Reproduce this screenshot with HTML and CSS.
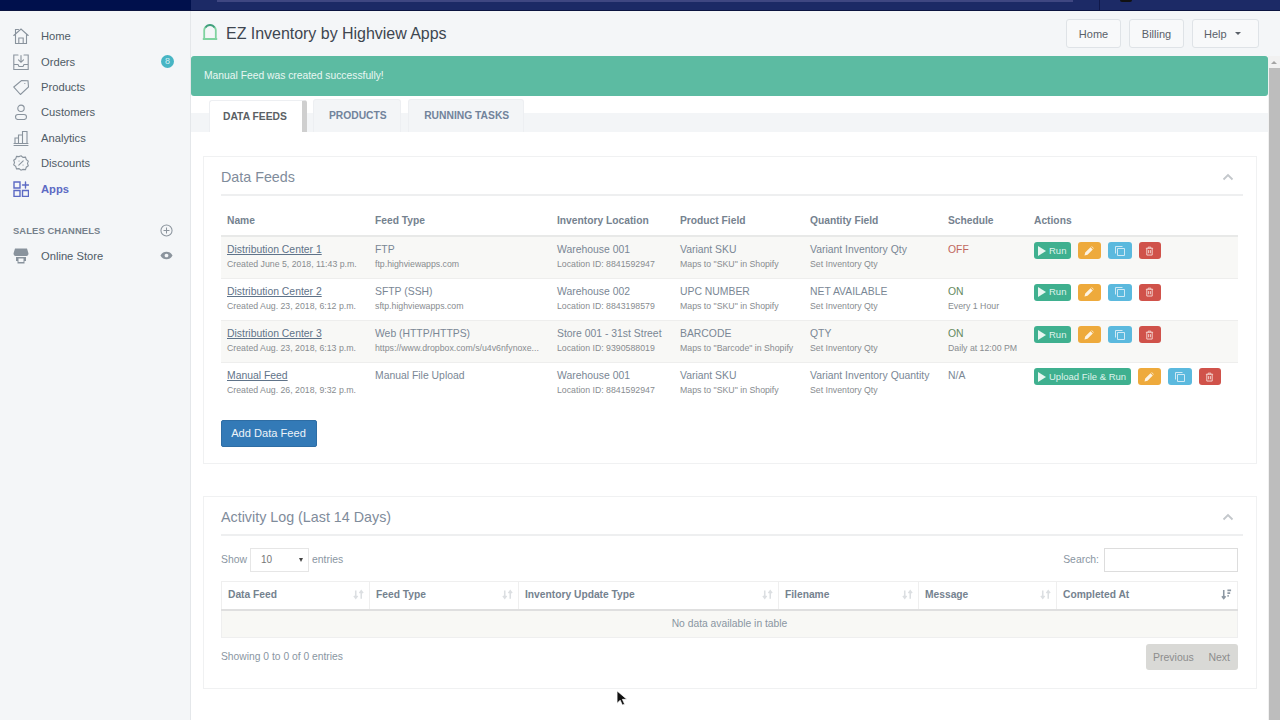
FILE: index.html
```html
<!DOCTYPE html>
<html lang="en">
<head>
<meta charset="utf-8">
<title>EZ Inventory by Highview Apps</title>
<link rel="stylesheet" href="styles.css">
</head>
<body>
<div class="topbar">
  <div class="topbar-brand"></div>
  <div class="topbar-rest"><div class="topbar-search"></div><div class="topbar-div"></div><div class="topbar-avatar"></div></div>
</div>
<div class="shell">
  <aside class="sidebar">
    <nav class="nav">
      <a class="nav-item"><svg class="nav-icon" viewBox="0 0 16 16"><path d="M.8 7.500 8 1l7.200 6.500M2.500 6v9.500h11V6M5.800 15.500V10h4.400v5.500M2.500 5V1.500h3"/></svg><span>Home</span></a>
      <a class="nav-item"><svg class="nav-icon" viewBox="0 0 16 16"><path d="M5 1H.8v14.500h14.400V1H11M.8 10.500H5l1 2h4l1-2h4.200M8 1.500v6.500M5.500 5.800 8 8.300l2.500-2.500"/></svg><span>Orders</span><span class="badge">8</span></a>
      <a class="nav-item"><svg class="nav-icon" viewBox="0 0 16 16"><path d="M.8 8 8.500 1.500l6.500.3.500 6.200L7.500 15.500zM11.800 4.500h.1"/></svg><span>Products</span></a>
      <a class="nav-item"><svg class="nav-icon" viewBox="0 0 16 16"><circle cx="8" cy="4.300" r="3.200"/><rect x="2.500" y="10.500" width="11" height="5" rx="2.500"/></svg><span>Customers</span></a>
      <a class="nav-item"><svg class="nav-icon" viewBox="0 0 16 16"><path d="M1 15.500h14M1 13.500h14M2 13.500V8h3.500v5.500M5.500 13.500V5h4v8.500M9.500 13.500V1.500H14v12"/></svg><span>Analytics</span></a>
      <a class="nav-item"><svg class="nav-icon" viewBox="0 0 16 16"><path d="M8 .8l2 1.600 2.500-.2.800 2.400 2 1.500-.8 2.300.8 2.300-2 1.500-.8 2.400-2.500-.2L8 15.200 6 13.600l-2.500.2-.8-2.400-2-1.500.8-2.300-.8-2.300 2-1.500.8-2.400 2.500.2zM5.800 10.200l4.400-4.400M6 6h.1M10 10h.1"/></svg><span>Discounts</span></a>
      <a class="nav-item nav-active"><svg class="nav-icon" viewBox="0 0 16 16"><path d="M1 1h6v6H1zM1 9.500h6v6H1zM9.500 9.500h6v6h-6zM12.500 1v6M9.500 4h6"/></svg><span>Apps</span></a>
    </nav>
    <div class="channels-head"><span>SALES CHANNELS</span><svg class="side-action" viewBox="0 0 14 14"><circle cx="7" cy="7" r="6"/><path d="M7 3.800v6.400M3.800 7h6.400"/></svg></div>
    <a class="nav-item"><svg class="nav-icon store" viewBox="0 0 16 16"><path fill-rule="evenodd" d="M2 .5h12l1.500 5c0 1.500-1 2.500-2 2.500h-11c-1 0-2-1-2-2.500zM3 9h10v4h-1.500v2.500h-7V13H3zM5.500 10.500v3.500h5v-3.500z"/></svg><span>Online Store</span><svg class="side-action eye" viewBox="0 0 14 14"><path d="M0.500 7C2 4 4.500 3 7 3s5 1 6.500 4C12 10 9.500 11 7 11S2 10 .5 7zM7 5a2 2 0 1 0 .01 0z" fill-rule="evenodd"/></svg></a>
  </aside>
  <div class="main">
    <header class="app-header">
      <div class="app-title">
        <svg class="app-logo" viewBox="0 0 16 17"><path class="logo-side" d="M2.200 16V6c0-1 .5-2 1.500-3M13.800 16V6c0-1-.5-2-1.500-3M.8 15h14.400"/><path class="logo-top" d="M3.500 3.500C4.500 1.800 6 1 8 1s3.500.8 4.500 2.500"/></svg>
        <h1>EZ Inventory by Highview Apps</h1>
      </div>
      <div class="header-actions">
        <a class="hbtn">Home</a>
        <a class="hbtn">Billing</a>
        <a class="hbtn">Help <i class="caret"></i></a>
      </div>
    </header>
    <div class="scrollarea">
      <div class="content">
        <div class="alert">Manual Feed was created successfully!</div>
        <div class="tabs">
          <a class="tab tab-active">DATA FEEDS</a>
          <a class="tab">PRODUCTS</a>
          <a class="tab">RUNNING TASKS</a>
        </div>
        <section class="card card-feeds">
          <div class="card-head"><h2>Data Feeds</h2><svg class="chev" viewBox="0 0 12 8"><path d="M1.500 6.500 6 2l4.500 4.500"/></svg></div>
          <table class="feeds">
            <thead>
              <tr><th class="c1">Name</th><th class="c2">Feed Type</th><th class="c3">Inventory Location</th><th class="c4">Product Field</th><th class="c5">Quantity Field</th><th class="c6">Schedule</th><th>Actions</th></tr>
            </thead>
            <tbody>
              <tr class="odd">
                <td><a class="link">Distribution Center 1</a><small>Created June 5, 2018, 11:43 p.m.</small></td>
                <td>FTP<small>ftp.highviewapps.com</small></td>
                <td>Warehouse 001<small>Location ID: 8841592947</small></td>
                <td>Variant SKU<small>Maps to "SKU" in Shopify</small></td>
                <td>Variant Inventory Qty<small>Set Inventory Qty</small></td>
                <td><span class="off">OFF</span></td>
                <td><div class="acts"><a class="act green"><svg class="ic-play" viewBox="0 0 8 10"><path d="M0 0l8 5-8 5z"/></svg> Run</a><a class="act orange"><svg class="ic" viewBox="0 0 10 10"><path d="M.5 9.500l.7-3L6.500 1.200l2.300 2.300-5.300 5.300zM7.200.5l.6-.3 2 2-.3.600z"/></svg></a><a class="act blue"><svg class="ic-line" viewBox="0 0 12 12"><path d="M1.500 8.500V1.500h7M3.500 3.500h7v7h-7z"/></svg></a><a class="act red"><svg class="ic-trash" viewBox="0 0 10 10"><path d="M1 2h8M3.500 2V.7h3V2M2 2v7.500h6V2M4 4v3.500M6 4v3.500"/></svg></a></div></td>
              </tr>
              <tr>
                <td><a class="link">Distribution Center 2</a><small>Created Aug. 23, 2018, 6:12 p.m.</small></td>
                <td>SFTP (SSH)<small>sftp.highviewapps.com</small></td>
                <td>Warehouse 002<small>Location ID: 8843198579</small></td>
                <td>UPC NUMBER<small>Maps to "SKU" in Shopify</small></td>
                <td>NET AVAILABLE<small>Set Inventory Qty</small></td>
                <td><span class="on">ON</span><small>Every 1 Hour</small></td>
                <td><div class="acts"><a class="act green"><svg class="ic-play" viewBox="0 0 8 10"><path d="M0 0l8 5-8 5z"/></svg> Run</a><a class="act orange"><svg class="ic" viewBox="0 0 10 10"><path d="M.5 9.500l.7-3L6.500 1.200l2.300 2.300-5.300 5.300zM7.200.5l.6-.3 2 2-.3.600z"/></svg></a><a class="act blue"><svg class="ic-line" viewBox="0 0 12 12"><path d="M1.500 8.500V1.500h7M3.500 3.500h7v7h-7z"/></svg></a><a class="act red"><svg class="ic-trash" viewBox="0 0 10 10"><path d="M1 2h8M3.500 2V.7h3V2M2 2v7.500h6V2M4 4v3.500M6 4v3.500"/></svg></a></div></td>
              </tr>
              <tr class="odd">
                <td><a class="link">Distribution Center 3</a><small>Created Aug. 23, 2018, 6:13 p.m.</small></td>
                <td>Web (HTTP/HTTPS)<small>https://www.dropbox.com/s/u4v6nfynoxe...</small></td>
                <td>Store 001 - 31st Street<small>Location ID: 9390588019</small></td>
                <td>BARCODE<small>Maps to "Barcode" in Shopify</small></td>
                <td>QTY<small>Set Inventory Qty</small></td>
                <td><span class="on">ON</span><small>Daily at 12:00 PM</small></td>
                <td><div class="acts"><a class="act green"><svg class="ic-play" viewBox="0 0 8 10"><path d="M0 0l8 5-8 5z"/></svg> Run</a><a class="act orange"><svg class="ic" viewBox="0 0 10 10"><path d="M.5 9.500l.7-3L6.500 1.200l2.300 2.300-5.300 5.300zM7.200.5l.6-.3 2 2-.3.600z"/></svg></a><a class="act blue"><svg class="ic-line" viewBox="0 0 12 12"><path d="M1.500 8.500V1.500h7M3.500 3.500h7v7h-7z"/></svg></a><a class="act red"><svg class="ic-trash" viewBox="0 0 10 10"><path d="M1 2h8M3.500 2V.7h3V2M2 2v7.500h6V2M4 4v3.500M6 4v3.500"/></svg></a></div></td>
              </tr>
              <tr>
                <td><a class="link">Manual Feed</a><small>Created Aug. 26, 2018, 9:32 p.m.</small></td>
                <td>Manual File Upload</td>
                <td>Warehouse 001<small>Location ID: 8841592947</small></td>
                <td>Variant SKU<small>Maps to "SKU" in Shopify</small></td>
                <td>Variant Inventory Quantity<small>Set Inventory Qty</small></td>
                <td>N/A</td>
                <td><div class="acts"><a class="act green"><svg class="ic-play" viewBox="0 0 8 10"><path d="M0 0l8 5-8 5z"/></svg> Upload File &amp; Run</a><a class="act orange"><svg class="ic" viewBox="0 0 10 10"><path d="M.5 9.500l.7-3L6.500 1.200l2.300 2.300-5.300 5.300zM7.200.5l.6-.3 2 2-.3.600z"/></svg></a><a class="act blue"><svg class="ic-line" viewBox="0 0 12 12"><path d="M1.500 8.500V1.500h7M3.500 3.500h7v7h-7z"/></svg></a><a class="act red"><svg class="ic-trash" viewBox="0 0 10 10"><path d="M1 2h8M3.500 2V.7h3V2M2 2v7.500h6V2M4 4v3.500M6 4v3.500"/></svg></a></div></td>
              </tr>
            </tbody>
          </table>
          <a class="primary">Add Data Feed</a>
        </section>
        <section class="card card-log">
          <div class="card-head"><h2>Activity Log (Last 14 Days)</h2><svg class="chev" viewBox="0 0 12 8"><path d="M1.500 6.500 6 2l4.500 4.500"/></svg></div>
          <div class="dt-controls">
            <div class="dt-length">Show <span class="select">10<i></i></span> entries</div>
            <div class="dt-search">Search: <span class="input"></span></div>
          </div>
          <table class="log">
            <thead>
              <tr>
                <th class="l1">Data Feed<svg class="sort" viewBox="0 0 12 12"><path d="M3 1.500v8M1 7.500l2 2.500 2-2.500M9 10.500v-8M7 4.500l2-2.500 2 2.500"/></svg></th>
                <th class="l2">Feed Type<svg class="sort" viewBox="0 0 12 12"><path d="M3 1.500v8M1 7.500l2 2.500 2-2.500M9 10.500v-8M7 4.500l2-2.500 2 2.500"/></svg></th>
                <th class="l3">Inventory Update Type<svg class="sort" viewBox="0 0 12 12"><path d="M3 1.500v8M1 7.500l2 2.500 2-2.500M9 10.500v-8M7 4.500l2-2.500 2 2.500"/></svg></th>
                <th class="l4">Filename<svg class="sort" viewBox="0 0 12 12"><path d="M3 1.500v8M1 7.500l2 2.500 2-2.500M9 10.500v-8M7 4.500l2-2.500 2 2.500"/></svg></th>
                <th class="l5">Message<svg class="sort" viewBox="0 0 12 12"><path d="M3 1.500v8M1 7.500l2 2.500 2-2.500M9 10.500v-8M7 4.500l2-2.500 2 2.500"/></svg></th>
                <th>Completed At<svg class="sort sort-on" viewBox="0 0 12 12"><path d="M3 1v9.500M1 8l2 2.500L5 8M7 1.500h4M7 4.500h3M7 7.500h1.500"/></svg></th>
              </tr>
            </thead>
            <tbody><tr><td colspan="6">No data available in table</td></tr></tbody>
          </table>
          <div class="dt-foot">
            <div class="dt-info">Showing 0 to 0 of 0 entries</div>
            <div class="pager"><span>Previous</span><span>Next</span></div>
          </div>
        </section>
      </div>
      <div class="scrollbar"><div class="sb-arrow"><i></i></div><div class="sb-thumb"></div></div>
    </div>
  </div>
</div>
<svg class="cursor" viewBox="0 0 12 18"><path d="M1 1v14l3.500-3.500 2.500 5.500 2.500-1-2.500-5.500h5z"/></svg>
</body>
</html>
```
FILE: styles.css
```css
* { box-sizing: border-box; }
html, body { height: 100%; }
body {
  margin: 0;
  overflow: hidden;
  background: #fff;
  font-family: "Liberation Sans", Arial, sans-serif;
  font-size: 10.4px;
  color: #7a8795;
  display: flex;
  flex-direction: column;
}
a { color: inherit; text-decoration: none; }
h1, h2 { margin: 0; font-weight: 400; }

/* top bar */
.topbar { height: 11px; flex: none; display: flex; border-bottom: 1px solid #0b1440; }
.topbar-brand { width: 191px; background: #00104c; }
.topbar-rest { flex: 1; background: #1c2a66; display: flex; align-items: flex-start; position: relative; }
.topbar-search { margin-left: 26px; width: 856px; height: 2px; background: #3f4782; }
.topbar-div { margin-left: 26px; width: 1px; height: 10px; background: #10184a; }
.topbar-avatar { position: absolute; left: 929px; top: 0; width: 12px; height: 2px; background: #111; border-radius: 0 0 6px 6px; }

.shell { flex: 1; display: flex; min-height: 0; }

/* sidebar */
.sidebar { width: 191px; flex: none; background: #f4f6f8; border-right: 1px solid #e4e7ea; padding-top: 12.5px; }
.nav { display: flex; flex-direction: column; }
.nav-item { height: 25.4px; display: flex; align-items: center; padding: 0 16px 0 13px; font-size: 11.2px; color: #4f5b66; }
.nav-icon { width: 16px; height: 16px; margin-right: 12px; fill: none; stroke: #89939d; stroke-width: 1.1; stroke-linecap: round; flex: none; }
.nav-icon.store { fill: #89939d; stroke: none; }
.nav-active { color: #5c6ac4; font-weight: 700; }
.nav-active .nav-icon { stroke: #5c6ac4; stroke-width: 1.4; }
.badge { margin-left: auto; width: 13px; height: 13px; border-radius: 50%; background: #47b5c4; color: #d5eff2; font-size: 9px; line-height: 13px; text-align: center; }
.channels-head { margin-top: 16px; height: 26px; display: flex; align-items: center; justify-content: space-between; padding: 0 17px 0 13px; font-size: 9.4px; font-weight: 700; color: #75808b; letter-spacing: .1px; }
.side-action { width: 13px; height: 13px; fill: none; stroke: #8b949d; stroke-width: 1.1; }
.eye { margin-left: auto; margin-right: 1px; fill: #8b949d; stroke: none; }

/* main */
.main { flex: 1; min-width: 0; display: flex; flex-direction: column; background: #f4f6f8; }
.app-header { height: 45px; flex: none; display: flex; align-items: center; justify-content: space-between; padding: 0 21px 0 11px; }
.app-title { display: flex; align-items: center; gap: 8px; }
.app-logo { width: 16px; height: 17px; fill: none; margin-top: -3px; }
.logo-side { stroke: #7fd3a0; stroke-width: 1.8; }
.logo-top { stroke: #3f9f7c; stroke-width: 1.8; }
h1 { font-size: 16px; color: #3e4650; letter-spacing: -.03px; }
.header-actions { display: flex; gap: 8px; }
.hbtn { height: 29px; padding: 0 11px; display: flex; align-items: center; gap: 7px; background: #f8f9fa; border: 1px solid #dfe3e7; border-radius: 3px; font-size: 11px; color: #5a6169; }
.hbtn:first-child { width: 55px; justify-content: center; }
.hbtn:nth-child(2) { width: 55px; justify-content: center; }
.hbtn:nth-child(3) { width: 67px; }
.caret { margin-left: 1px; border: 3.5px solid transparent; border-top-color: #5a6169; border-bottom: 0; width: 0; height: 0; }

.scrollarea { flex: 1; min-height: 0; display: flex; }
.content { flex: 1; min-width: 0; background: #fff; }
.scrollbar { width: 12px; flex: none; background: #f1f1f1; display: flex; flex-direction: column; }
.sb-arrow { height: 12px; display: flex; align-items: center; justify-content: center; }
.sb-arrow i { border: 3px solid transparent; border-bottom-color: #a4a4a4; border-top: 0; }
.sb-thumb { flex: 1; background: #bdbdbd; margin-left: 1px; }

.alert { height: 40px; display: flex; align-items: center; padding: 0 0 1px 13px; background: #5cbba2; color: #e9f7f3; border-radius: 3px; font-size: 10.3px; }
.tabs { margin-top: 3px; height: 33px; padding-left: 18px; display: flex; align-items: flex-end; gap: 7px; background: linear-gradient(#fff 14px, #f3f5f7 14px); }
.tab { height: 33px; padding: 0 13.5px 1px 15px; display: flex; align-items: center; font-size: 10.3px; font-weight: 700; color: #71839b; background: #f3f5f7; border: 1px solid #edeff2; border-bottom: 0; border-radius: 3px 3px 0 0; }
.tab-active { height: 32px; color: #5b5f64; background: #fff; border-right: 5px solid #cfcfcf; padding: 0 15px 0 13px; margin-right: -1px; }

.card { margin: 0 11px 0 12px; border: 1px solid #f0f1f2; padding: 0 18px 0 17px; }
.card-feeds { margin-top: 24px; height: 308px; }
.card-log { margin-top: 32px; height: 193px; }
.card-head { height: 39px; padding: 2px 9px 0 0; display: flex; align-items: center; justify-content: space-between; border-bottom: 2px solid #eeeff0; margin: 0 -5px 0 0; }
.card-head h2 { font-size: 14.3px; color: #7f8c9b; }
.chev { width: 12px; height: 8px; margin-top: 1px; fill: none; stroke: #c3c7cb; stroke-width: 1.8; }

table { border-collapse: collapse; table-layout: fixed; width: 1017px; }
.feeds { margin-top: 10px; }
.feeds th { height: 30px; text-align: left; padding: 0 6px; font-size: 10.25px; font-weight: 700; color: #75828f; border-bottom: 2px solid #e8e9e8; }
.c1 { width: 148px; } .c2 { width: 182px; } .c3 { width: 123px; } .c4 { width: 130px; } .c5 { width: 138px; } .c6 { width: 86px; }
.feeds td { height: 42.3px; padding: 6px 6px 0; vertical-align: top; border-bottom: 1px solid #eeeeed; line-height: 14px; white-space: nowrap; overflow: visible; }
.feeds tbody tr:last-child td { border-bottom: 0; }
.odd { background: #f8f8f6; }
small { display: block; margin-top: 0; font-size: 8.75px; line-height: 15px; color: #888c90; }
.link { color: #5f7389; text-decoration: underline; }
.off { color: #c0675d; }
.on { color: #65895e; }
.acts { display: flex; gap: 7px; margin-top: -1px; }
.act { height: 17px; min-width: 23px; padding: 0 5px 0 4px; display: inline-flex; align-items: center; justify-content: center; gap: 3px; border-radius: 3px; font-size: 9.5px; color: #dff3ec; }
.green { background: #3fb08f; }
.orange { background: #eeaa3c; }
.blue { background: #5bb9de; width: 24px; }
.red { background: #d0524a; width: 22px; min-width: 22px; }
.ic-play { width: 8px; height: 10px; fill: #e8f6f1; }
.ic { width: 10px; height: 10px; fill: #fdf3e3; flex: none; }
.ic-line { width: 12px; height: 12px; fill: none; stroke: #cfe9f5; stroke-width: 1; flex: none; }
.ic-trash { width: 9px; height: 10px; fill: none; stroke: #f3cfcb; stroke-width: 1.1; flex: none; }
.primary { margin-top: 15px; width: 96px; height: 27px; display: flex; align-items: center; justify-content: center; background: #337ab7; border: 1px solid #2e6da4; border-radius: 2px; color: #eef4f9; font-size: 11.1px; padding: 0 1px 1px 0; }

.dt-controls { margin-top: 12px; height: 23px; display: flex; justify-content: space-between; align-items: center; width: 1017px; }
.dt-length, .dt-search { display: flex; align-items: center; gap: 3px; color: #8a96a2; padding-bottom: 1px; }
.dt-search { gap: 5px; }
.select { width: 59px; height: 24px; margin-bottom: -1px; display: flex; align-items: center; justify-content: space-between; padding: 0 5px 0 10px; border: 1px solid #e6e6e6; font-size: 10px; color: #777; }
.select i { border: 2.5px solid transparent; border-top: 4px solid #444; border-bottom: 0; }
.input { width: 134px; height: 24px; margin-bottom: -1px; border: 1px solid #ddd; }
.log { margin-top: 10px; border: 1px solid #efefef; }
.log th { position: relative; height: 28px; text-align: left; padding: 0 6px 2px; font-size: 10.25px; font-weight: 700; color: #75828f; border-right: 1px solid #efefef; border-bottom: 2px solid #dfdfdf; }
.l1 { width: 148px; } .l2 { width: 149px; } .l3 { width: 260px; } .l4 { width: 140px; } .l5 { width: 138px; }
.sort { position: absolute; right: 5px; top: 7px; width: 11px; height: 11px; fill: none; stroke: #dcdfe2; stroke-width: 1.7; }
.sort-on { stroke: #8d98a3; }
.log td { height: 28px; padding-bottom: 2px; text-align: center; background: #f8f8f5; color: #8a96a2; font-size: 10.3px; }
.dt-foot { margin-top: 6px; width: 1017px; display: flex; justify-content: space-between; align-items: flex-start; }
.dt-info { margin-top: 6px; color: #8a96a2; font-size: 10.3px; line-height: 13px; }
.pager { width: 92px; height: 26px; display: flex; align-items: center; justify-content: space-between; padding: 0 8px 0 7px; background: #d9d9d6; border-radius: 3px; font-size: 10.5px; color: #8d8d8d; }

.cursor { position: fixed; left: 616px; top: 690px; width: 11px; height: 16px; fill: #111; stroke: #fff; stroke-width: .8; }
```
